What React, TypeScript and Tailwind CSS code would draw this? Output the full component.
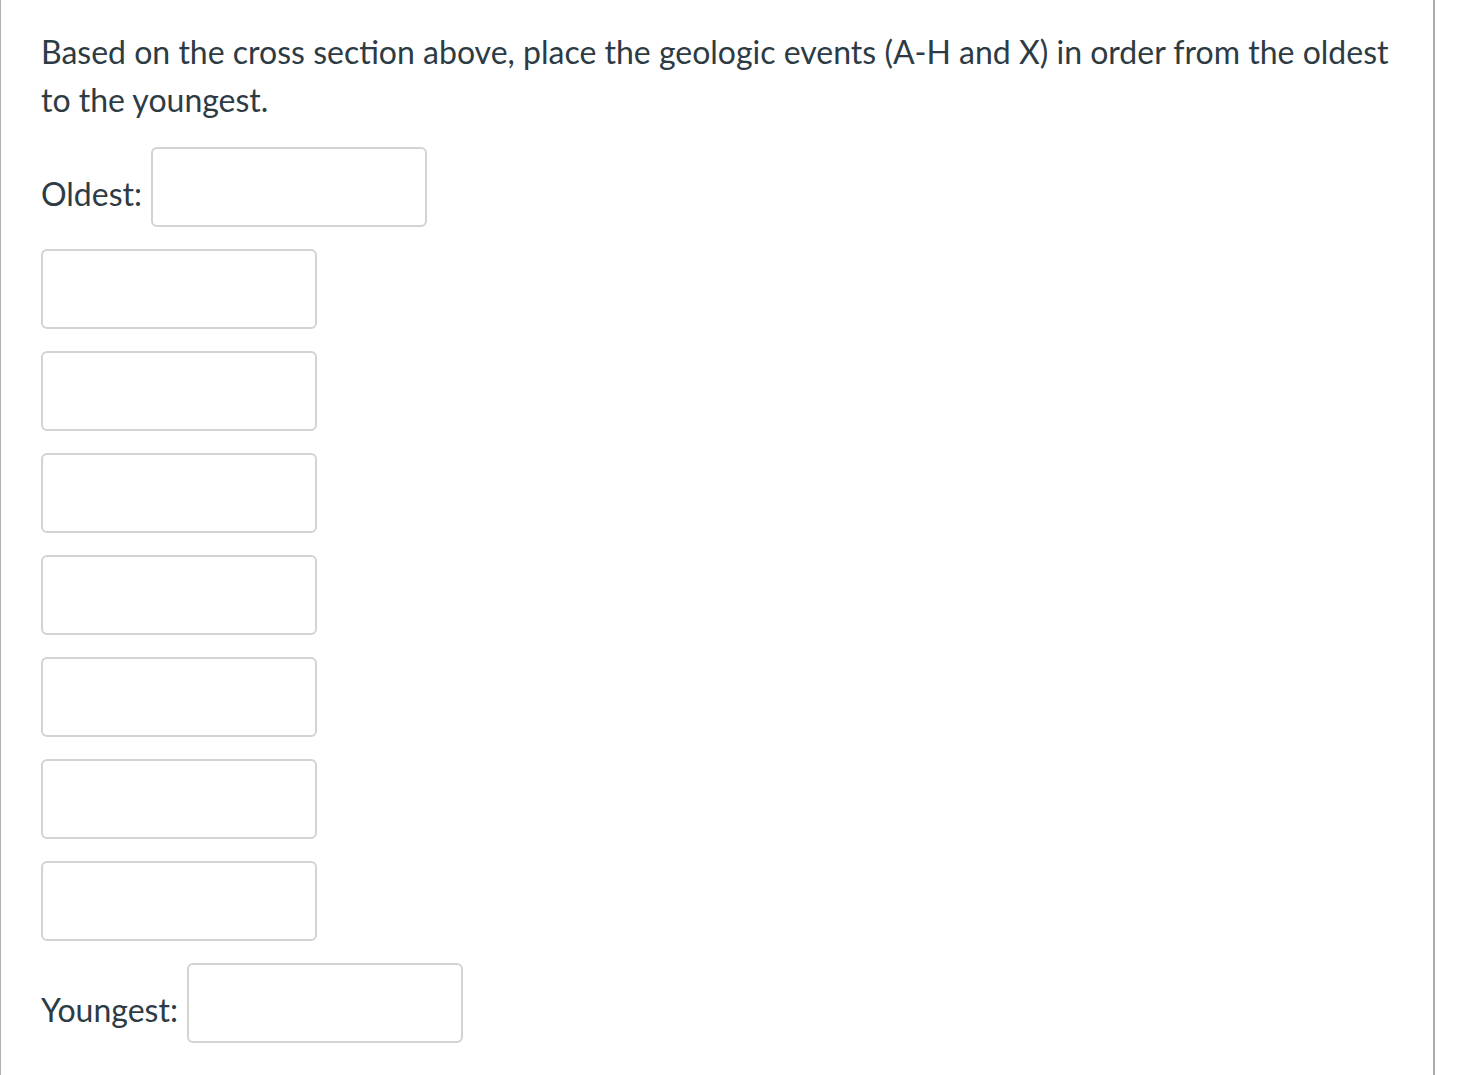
import React from "react";

function Box({ className = "" }: { className?: string }) {
  return (
    <div
      className={`h-[80px] w-[276px] shrink-0 rounded-[6px] border-2 border-[#d3d3d3] bg-white ${className}`}
    />
  );
}

export default function App() {
  return (
    <div
      className="h-[1075px] w-[1435px] border-l border-r-2 border-l-[#b0b0b0] border-r-[#aaaaaa] bg-white text-[#2d3b45]"
      style={{ fontFamily: "Lato, 'Noto Sans', sans-serif" }}
    >
      <div className="pl-[40px] pt-[28px] pr-[20px]">
        <p className="text-[32px] leading-[48px]">
          Based on the cross section above, place the geologic events (A-H and X) in order from the oldest
          <br />
          to the youngest.
        </p>
        <div className="mt-[23px] flex flex-col gap-[22px]">
          <div className="flex items-center gap-[9px]">
            <span className="mt-[14px] text-[32px] leading-[48px]">Oldest:</span>
            <Box />
          </div>
          <Box />
          <Box />
          <Box />
          <Box />
          <Box />
          <Box />
          <Box />
          <div className="flex items-center gap-[9px]">
            <span className="mt-[14px] text-[32px] leading-[48px]">Youngest:</span>
            <Box />
          </div>
        </div>
      </div>
    </div>
  );
}
